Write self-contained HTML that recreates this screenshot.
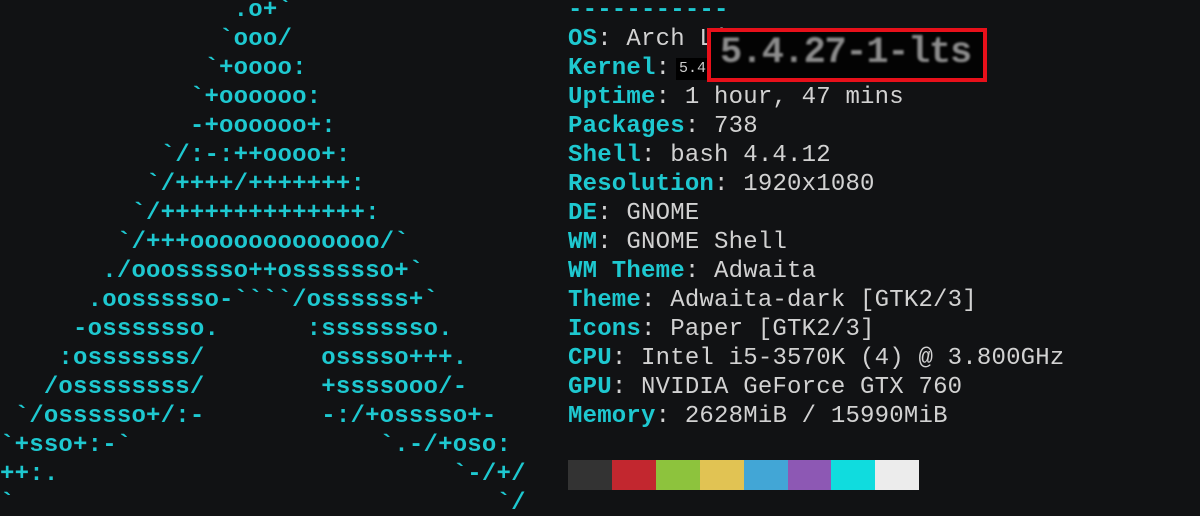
<!DOCTYPE html>
<html><head><style>
html,body{margin:0;padding:0;background:#111214;width:1200px;height:516px;overflow:hidden;position:relative}
pre{margin:0;position:absolute;font-family:"Liberation Mono",monospace;font-size:24px;letter-spacing:0.2px;line-height:29px;white-space:pre}
.art{left:-29.2px;top:-33px;color:#1ec8d0;font-weight:bold}
.info{left:568px;top:-4px;color:#d2d2d2}
.info b{color:#1ec8d0}
.blk{position:absolute;top:460px;height:30px;width:44px}
</style></head><body>
<pre class="art">                   -&#96;
                  .o+&#96;
                 &#96;ooo/
                &#96;+oooo:
               &#96;+oooooo:
               -+oooooo+:
             &#96;/:-:++oooo+:
            &#96;/++++/+++++++:
           &#96;/++++++++++++++:
          &#96;/+++ooooooooooooo/&#96;
         ./ooosssso++osssssso+&#96;
        .oossssso-&#96;&#96;&#96;&#96;/ossssss+&#96;
       -osssssso.      :ssssssso.
      :osssssss/        osssso+++.
     /ossssssss/        +ssssooo/-
   &#96;/ossssso+/:-        -:/+osssso+-
  &#96;+sso+:-&#96;                 &#96;.-/+oso:
 &#96;++:.                           &#96;-/+/
 .&#96;                                 &#96;/</pre>
<pre class="info"><b>-----------</b>
<b>OS</b>: Arch Linux
<b>Kernel</b>:
<b>Uptime</b>: 1 hour, 47 mins
<b>Packages</b>: 738
<b>Shell</b>: bash 4.4.12
<b>Resolution</b>: 1920x1080
<b>DE</b>: GNOME
<b>WM</b>: GNOME Shell
<b>WM Theme</b>: Adwaita
<b>Theme</b>: Adwaita-dark [GTK2/3]
<b>Icons</b>: Paper [GTK2/3]
<b>CPU</b>: Intel i5-3570K (4) @ 3.800GHz
<b>GPU</b>: NVIDIA GeForce GTX 760
<b>Memory</b>: 2628MiB / 15990MiB</pre>
<div style="position:absolute;left:676px;top:58px;width:40px;height:22px;background:#000;color:#ccc;font:15px 'Liberation Mono',monospace;line-height:22px;padding-left:3px">5.4</div>
<div style="position:absolute;left:707px;top:28px;width:272px;height:46px;border:4px solid #e8101a;background:#030303;overflow:hidden">
<div style="position:absolute;left:9px;top:0;height:46px;line-height:46px;color:#8c8c8c;font:bold 37px 'Liberation Mono',monospace;letter-spacing:-1.3px;filter:blur(1px);white-space:nowrap">5.4.27-1-lts</div>
</div>
<div class="blk" style="left:568px;background:#333333"></div>
<div class="blk" style="left:612px;background:#c2272f"></div>
<div class="blk" style="left:656px;background:#8dc33d"></div>
<div class="blk" style="left:700px;background:#e1c353"></div>
<div class="blk" style="left:744px;background:#42a6d6"></div>
<div class="blk" style="left:788px;background:#8d58b4"></div>
<div class="blk" style="left:831px;background:#10dcde"></div>
<div class="blk" style="left:875px;background:#ececec"></div>
</body></html>
